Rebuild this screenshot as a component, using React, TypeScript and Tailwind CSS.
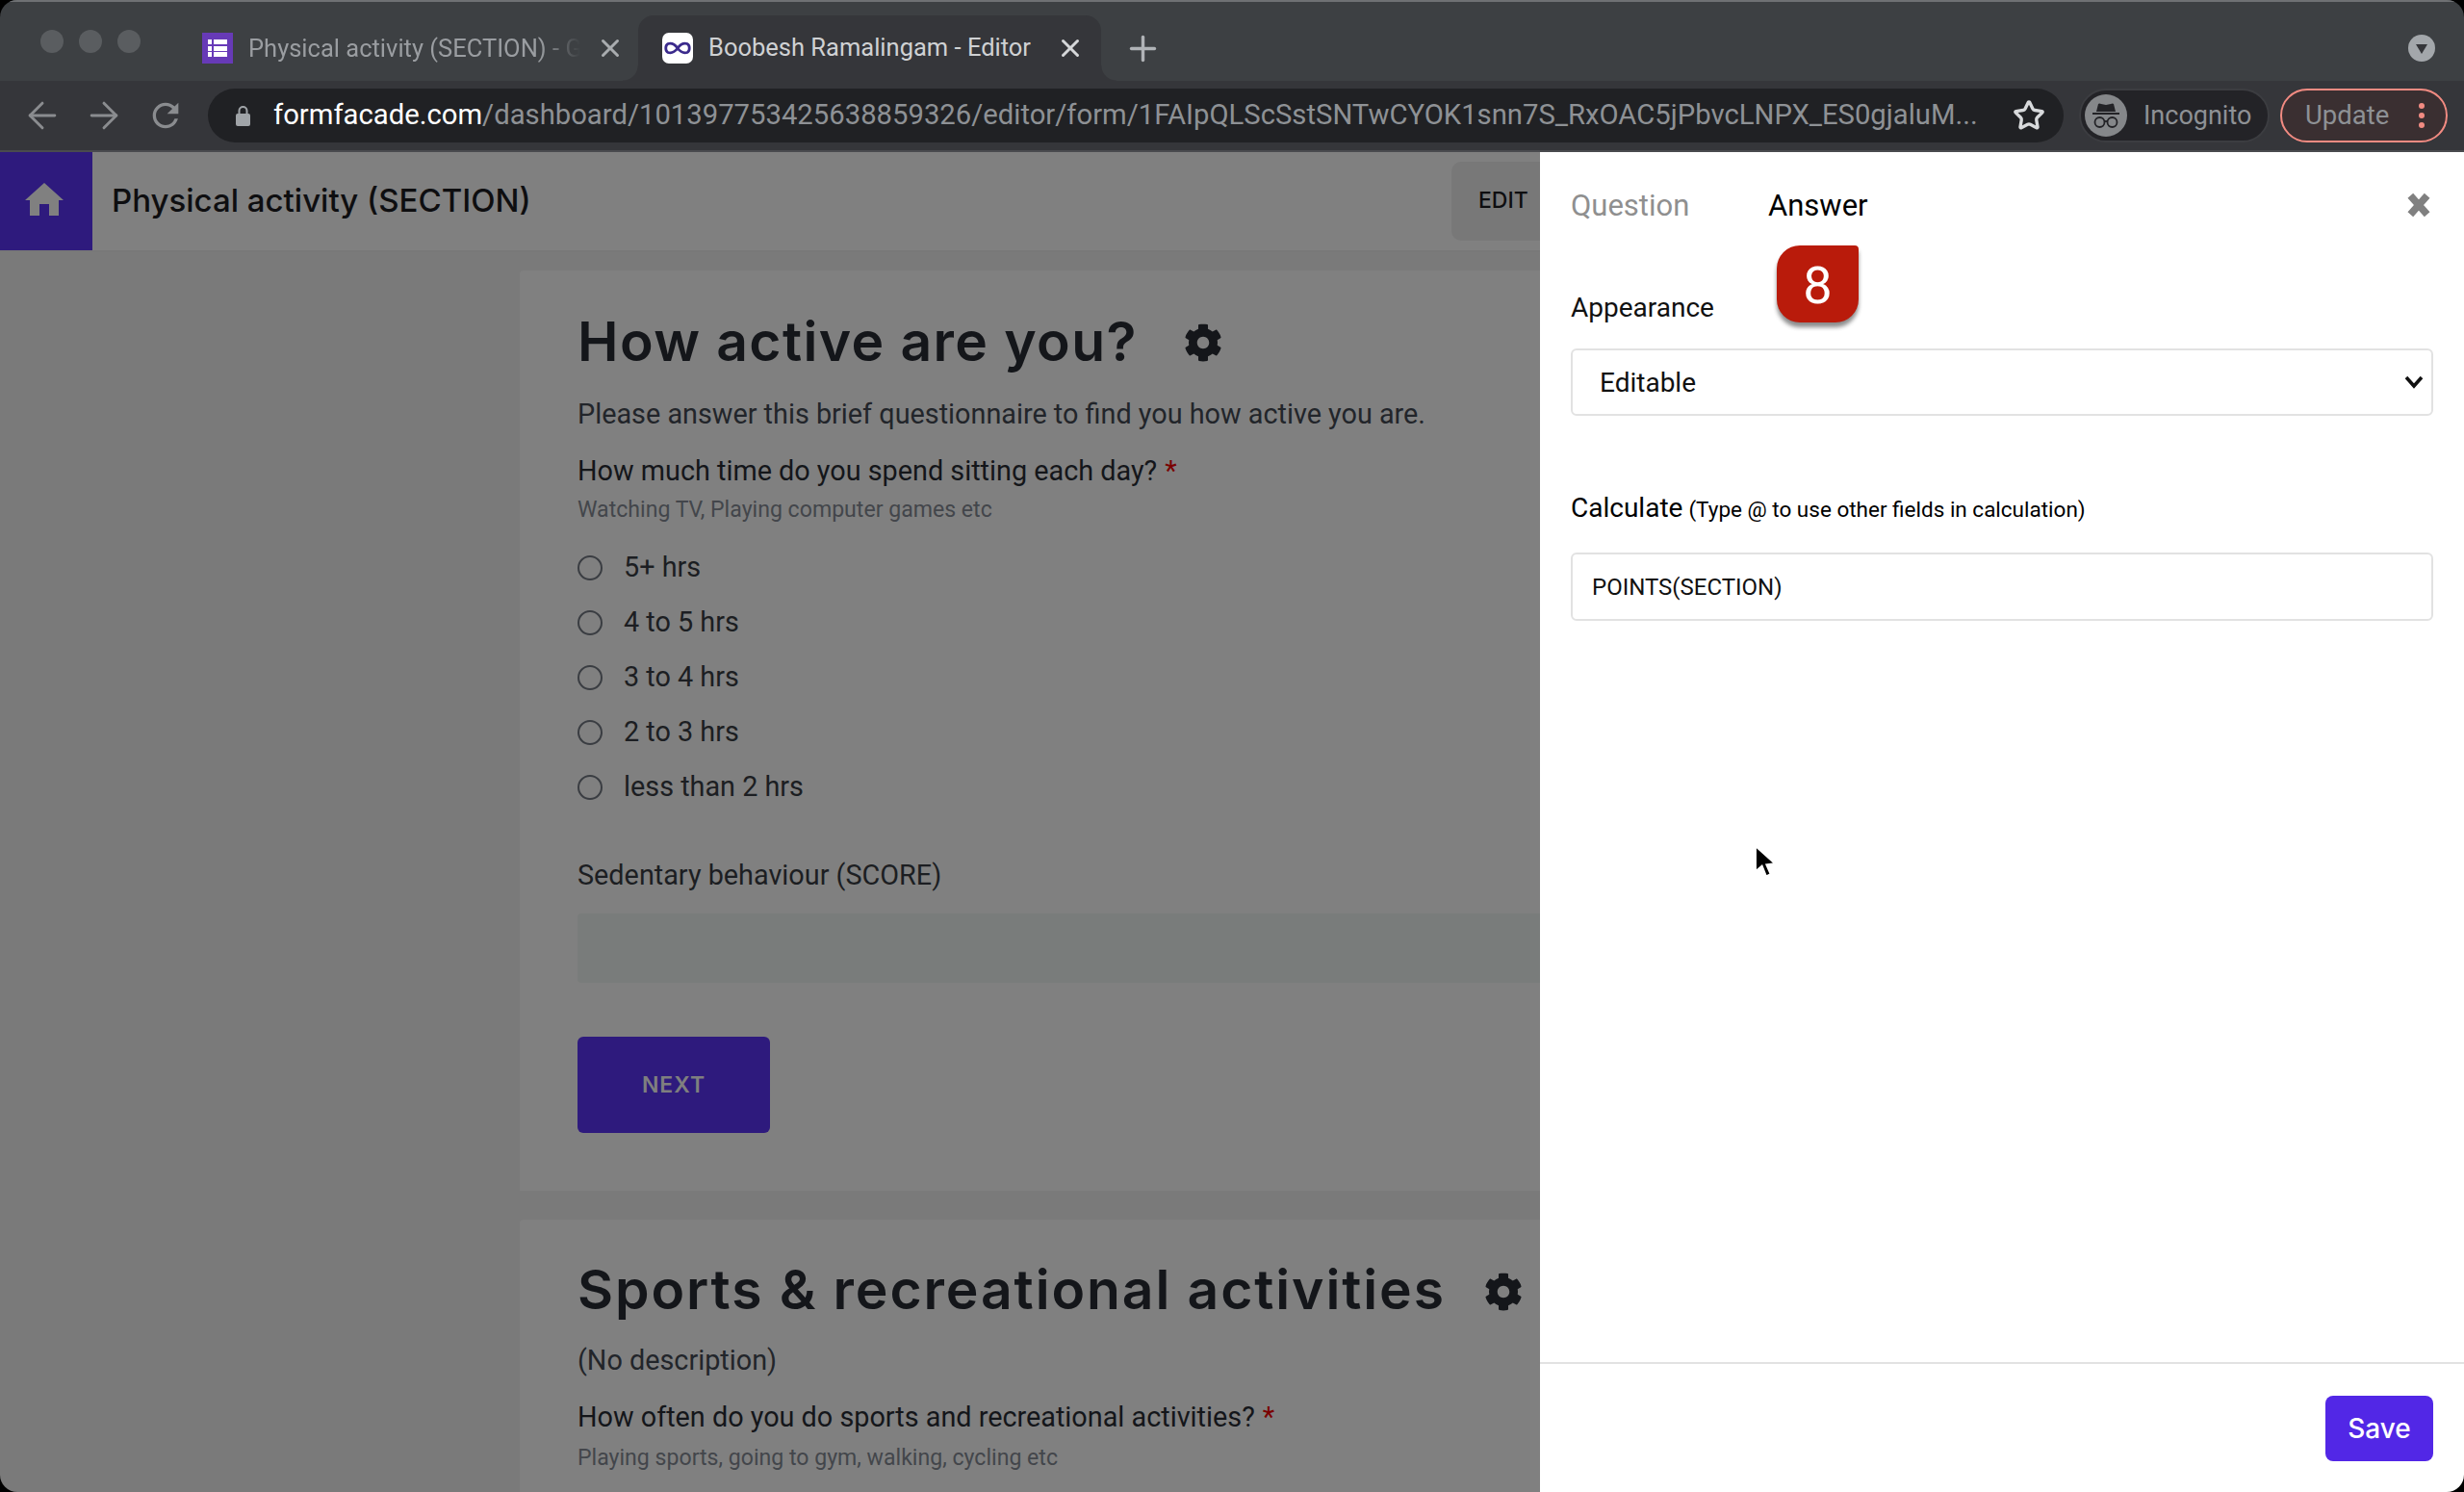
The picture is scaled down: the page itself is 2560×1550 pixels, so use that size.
import { ArrowLeft, ArrowRight, Plus, Star, X } from "lucide-react";
import { FaCog } from "react-icons/fa";
import { MdRefresh } from "react-icons/md";
import type { ReactNode } from "react";

const radios = ["5+ hrs", "4 to 5 hrs", "3 to 4 hrs", "2 to 3 hrs", "less than 2 hrs"];

function Required() {
  return <span className="text-[#7a0000] ml-[8px]">*</span>;
}

function ListFavicon() {
  return (
    <span className="w-[32px] h-[32px] bg-[#673ab7] flex flex-col justify-center gap-[1.5px] px-[6px] shrink-0">
      {[0, 1, 2].map((i) => (
        <span key={i} className="flex gap-[1.5px] h-[5px]">
          <span className="w-[4px] bg-white" />
          <span className="flex-1 bg-white" />
        </span>
      ))}
    </span>
  );
}

function TabStrip() {
  return (
    <div className="h-[84px] shrink-0 bg-[#3d4043] border-t-2 border-[#6f7174] flex items-end pl-[42px] pr-[30px]">
      {/* Traffic lights */}
      <div className="flex gap-[16px] h-full items-center">
        <span className="w-[24px] h-[24px] rounded-full bg-[#5a5d60]" />
        <span className="w-[24px] h-[24px] rounded-full bg-[#5a5d60]" />
        <span className="w-[24px] h-[24px] rounded-full bg-[#5a5d60]" />
      </div>

      <div className="h-[68px] w-[509px] ml-[8px] flex items-center pl-[56px] shrink-0">
        <ListFavicon />
        <span className="ml-[16px] w-[352px] text-[25.5px] text-[#9a9da1] whitespace-nowrap overflow-hidden [mask-image:linear-gradient(to_right,black_86%,transparent_98%)]">
          Physical activity (SECTION) - G
        </span>
        <X className="ml-[9px] w-[30px] h-[30px] text-[#a9acaf] shrink-0" strokeWidth={2.4} />
      </div>

      <div className="relative h-[68px] w-[481px] bg-[#35363a] rounded-t-[16px] flex items-center pl-[25px] pr-[17px] shrink-0">
        <span className="absolute left-[-16px] bottom-0 w-[16px] h-[16px] bg-[radial-gradient(circle_at_0_0,transparent_15px,#35363a_16px)]" />
        <span className="absolute right-[-16px] bottom-0 w-[16px] h-[16px] bg-[radial-gradient(circle_at_100%_0,transparent_15px,#35363a_16px)]" />
        <span className="w-[32px] h-[32px] bg-white rounded-[7px] flex items-center justify-center shrink-0">
          <svg viewBox="0 0 32 32" className="w-[32px] h-[32px]" fill="none" stroke="#3b2a8c" strokeWidth="2.8">
            <path d="M16 16 C13 12 9 10.5 6 11.5 C3 13 3 19 6 20.5 C9 21.5 13 20 16 16 C19 12 23 10.5 26 11.5 C29 13 29 19 26 20.5 C23 21.5 19 20 16 16 Z" />
          </svg>
        </span>
        <span className="ml-[16px] mb-[1px] text-[25.5px] text-[#cfd1d3] whitespace-nowrap">Boobesh Ramalingam - Editor</span>
        <X className="ml-auto w-[30px] h-[30px] text-[#d5d7d9] shrink-0" strokeWidth={2.4} />
      </div>

      <Plus className="ml-[23px] mb-[13px] w-[41px] h-[41px] text-[#b0b3b7] shrink-0" strokeWidth={2} />

      <div className="ml-auto mb-[20px] w-[28px] h-[28px] rounded-full bg-[#a3a7ab] flex items-center justify-center">
        <span className="w-0 h-0 border-x-[6px] border-x-transparent border-t-[10px] border-t-[#35363a] mt-[2px]" />
      </div>
    </div>
  );
}

function Toolbar() {
  return (
    <div className="h-[74px] shrink-0 bg-[#35363a] border-b-2 border-[#4a4b4f] flex items-start pt-[8px] pl-[22px]">
      <div className="flex items-center h-[56px] gap-[20px] text-[#8a8c8f]">
        <ArrowLeft className="w-[44px] h-[44px]" strokeWidth={1.6} />
        <ArrowRight className="w-[44px] h-[44px]" strokeWidth={1.6} />
        <MdRefresh className="w-[40px] h-[40px] mx-[2px]" />
      </div>

      <div className="ml-[22px] w-[1928px] h-[56px] rounded-full bg-[#202124] flex items-center pl-[29px] pr-[19px] shrink-0">
        <svg viewBox="0 0 15 21" className="w-[15px] h-[21px] shrink-0" fill="#a0a4a8">
          <rect x="0" y="8" width="15" height="13" rx="2" />
          <path d="M3.5 9 V5 a4 4 0 0 1 8 0 V9" fill="none" stroke="#a0a4a8" strokeWidth="2" />
        </svg>
        <div className="ml-[24px] flex-1 text-[29.25px] whitespace-nowrap overflow-hidden text-[#8e9195]">
          <span className="text-white">formfacade.com</span>
          /dashboard/101397753425638859326/editor/form/1FAIpQLScSstSNTwCYOK1snn7S_RxOAC5jPbvcLNPX_ES0gjaluM...
        </div>
        <Star className="w-[34px] h-[34px] text-[#d8dadc] shrink-0" strokeWidth={2.4} />
      </div>

      <div className="ml-[16px] w-[198px] h-[56px] rounded-full bg-[#232327] border-2 border-[#3c3d41] flex items-center pl-[4px] shrink-0">
        <span className="w-[44px] h-[44px] rounded-full bg-[#85878a] shrink-0">
          <svg viewBox="0 0 44 44" className="w-[44px] h-[44px]" fill="#232327">
            <path d="M14 10 Q15 9 17 10 L22 11 L27 10 Q29 9 30 10 L32 18 H12 Z" />
            <rect x="8" y="19" width="28" height="2" />
            <circle cx="15.5" cy="29" r="5" fill="none" stroke="#232327" strokeWidth="1.8" />
            <circle cx="28.5" cy="29" r="5" fill="none" stroke="#232327" strokeWidth="1.8" />
            <path d="M20.5 28h3" stroke="#232327" strokeWidth="1.8" />
          </svg>
        </span>
        <span className="ml-[17px] text-[27px] text-[#8e9195]">Incognito</span>
      </div>

      <div className="ml-[11px] w-[174px] h-[56px] rounded-full bg-[#3a2f31] border-2 border-[#f28b82] flex items-center pl-[24px] shrink-0">
        <span className="text-[27.5px] text-[#8e9195]">Update</span>
        <span className="ml-[31px] flex flex-col gap-[4px]">
          <span className="w-[6px] h-[6px] rounded-full bg-[#f28b82]" />
          <span className="w-[6px] h-[6px] rounded-full bg-[#f28b82]" />
          <span className="w-[6px] h-[6px] rounded-full bg-[#f28b82]" />
        </span>
      </div>
    </div>
  );
}

function SectionTitle(props: { title: string; className: string; gearClass: string }) {
  return (
    <div className={`h-[64px] flex items-center ${props.className}`}>
      <h2 className="font-[Inter,sans-serif] font-semibold text-[57px] leading-none text-[#14161a] whitespace-nowrap">
        {props.title}
      </h2>
      <FaCog className={`w-[40px] h-[40px] text-[#14161a] shrink-0 ${props.gearClass}`} />
    </div>
  );
}

function Card(props: { className?: string; children: ReactNode }) {
  return (
    <section className={`bg-[#808080] rounded-tl-[4px] pl-[60px] flex flex-col ${props.className ?? ""}`}>
      {props.children}
    </section>
  );
}

function FormPage() {
  return (
    <div className="w-[1600px] shrink-0 bg-[#7a7a7a] flex flex-col overflow-hidden">
      <header className="h-[104px] shrink-0 bg-[#808080] border-b-2 border-[#787878] flex items-center">
        <div className="w-[96px] h-full bg-[#2e1a7d] flex items-center justify-center">
          <svg viewBox="0 0 40 34" className="w-[40px] h-[34px] mr-[4px] mb-[4px]" fill="#808080">
            <path d="M20 0 L40 18 L35 18 L35 34 L25 34 L25 22 L15 22 L15 34 L5 34 L5 18 L0 18 Z" />
          </svg>
        </div>
        <h1 className="ml-[20px] font-[Inter,sans-serif] font-medium text-[33px] text-[#0e0e10]">
          Physical activity (SECTION)
        </h1>
        <div className="ml-auto w-[92px] h-[82px] bg-[#787878] rounded-l-[10px] flex items-center pl-[28px] pb-[2px] font-[Inter,sans-serif] font-medium text-[23px] text-[#0e0e10]">
          EDIT
        </div>
      </header>

      <div className="flex-1 pl-[540px] pt-[19px] flex flex-col gap-[30px]">
        <Card>
          <SectionTitle
            title="How active are you?"
            className="mt-[41px] tracking-[1.4px]"
            gearClass="ml-[48px] mt-[3px]"
          />
          <div className="h-[40px] mt-[25px] flex items-center text-[28.8px] text-[#22252a]">
            Please answer this brief questionnaire to find you how active you are.
          </div>
          <div className="h-[40px] mt-[19px] flex items-center text-[28.8px] text-[#14161a]">
            How much time do you spend sitting each day?
            <Required />
          </div>
          <div className="h-[30px] mt-[5px] flex items-center text-[23.1px] text-[#43464b]">
            Watching TV, Playing computer games etc
          </div>
          <div className="mt-[16px]">
            {radios.map((r) => (
              <div key={r} className="h-[57px] flex items-center">
                <span className="w-[26px] h-[26px] rounded-full border-2 border-[#3a3d42]" />
                <span className="ml-[22px] text-[28.8px] text-[#1c1e22]">{r}</span>
              </div>
            ))}
          </div>
          <div className="h-[40px] mt-[44px] flex items-center text-[28.8px] text-[#1c1e22]">
            Sedentary behaviour (SCORE)
          </div>
          <div className="h-[72px] mt-[19px] bg-[#797c7b] rounded-l-[4px]" />
          <div className="mt-[56px] pb-[60px]">
            <div className="w-[200px] h-[100px] bg-[#2e1a7d] rounded-[6px] flex items-center justify-center font-[Inter,sans-serif] font-semibold text-[23px] tracking-[1px] text-[#7f7f7f]">
              NEXT
            </div>
          </div>
        </Card>

        <Card className="flex-1">
          <SectionTitle
            title="Sports & recreational activities"
            className="mt-[40px] tracking-[1.9px]"
            gearClass="ml-[40px] mt-[5px]"
          />
          <div className="h-[40px] mt-[23px] flex items-center text-[28.8px] text-[#22252a]">(No description)</div>
          <div className="h-[40px] mt-[19px] flex items-center text-[28.8px] text-[#14161a]">
            How often do you do sports and recreational activities?
            <Required />
          </div>
          <div className="h-[30px] mt-[7px] flex items-center text-[23.1px] text-[#43464b]">
            Playing sports, going to gym, walking, cycling etc
          </div>
        </Card>
      </div>
    </div>
  );
}

function SidePanel() {
  return (
    <aside className="relative flex-1 bg-white flex flex-col">
      <div className="flex-1 px-[32px]">
        <div className="h-[40px] mt-[36px] flex items-center text-[31px]">
          <span className="text-[#8f8f8f] w-[205px]">Question</span>
          <span className="text-black">Answer</span>
          <svg viewBox="0 0 24 24" className="ml-auto mr-[2px] mb-[3px] w-[26px] h-[26px]" fill="none" stroke="#808080" strokeWidth="7">
            <path d="M4 3 L20 21 M20 3 L4 21" />
          </svg>
        </div>

        <div className="h-[40px] mt-[66px] flex items-center text-[28px] text-[#111]">Appearance</div>
        <div className="relative h-[70px] mt-[22px] border-2 border-[#e2e2e2] rounded-[6px] flex items-center pl-[28px] pt-[2px] text-[28px] text-[#111]">
          Editable
          <svg viewBox="0 0 20 14" className="absolute right-[8px] top-[26px] w-[20px] h-[14px]" fill="none" stroke="#111" strokeWidth="3.5">
            <path d="M2 2 L10 11 L18 2" />
          </svg>
        </div>

        <div className="h-[40px] mt-[76px] flex items-center text-black">
          <span className="text-[28px]">Calculate</span>
          <span className="ml-[6px] text-[22.5px] mt-[4px]">(Type @ to use other fields in calculation)</span>
        </div>
        <div className="h-[71px] mt-[26px] border-2 border-[#e2e2e2] rounded-[6px] flex items-center pl-[20px] text-[24px] text-[#111]">
          POINTS(SECTION)
        </div>
      </div>

      <div className="h-[135px] shrink-0 border-t-2 border-[#e2e2e2] flex justify-end pt-[33px] pr-[32px]">
        <div className="w-[112px] h-[68px] bg-[#5227e6] rounded-[8px] flex items-center justify-center font-[Inter,sans-serif] font-medium text-[28px] text-white">
          Save
        </div>
      </div>

      {/* Step badge */}
      <div className="absolute left-[246px] top-[97px] w-[85px] h-[80px] bg-[#b91b0b] rounded-[24px] rounded-tr-[4px] shadow-[0_5px_4px_rgba(0,0,0,0.45)] flex items-center justify-center pt-[2px] text-[54px] text-white">
        8
      </div>

      {/* Mouse pointer */}
      <svg viewBox="0 0 20 32" className="absolute left-[223px] top-[720px] w-[22px] h-[36px]">
        <path d="M1 1 L1 24 L7 19 L11 29 L15 27 L11 18 L19 17 Z" fill="#000" stroke="#fff" strokeWidth="1.5" />
      </svg>
    </aside>
  );
}

export default function App() {
  return (
    <div className="w-[2560px] h-[1550px] bg-black overflow-hidden font-[Roboto,sans-serif]">
      <div className="h-full flex flex-col rounded-[18px] overflow-hidden">
        <TabStrip />
        <Toolbar />
        <main className="flex-1 flex min-h-0">
          <FormPage />
          <SidePanel />
        </main>
      </div>
    </div>
  );
}
